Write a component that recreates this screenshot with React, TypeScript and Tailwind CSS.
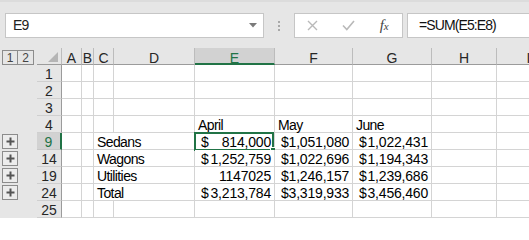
import React from 'react';

type Val = string | [string, string];

type RowData = {
  n: string;
  label?: string;
  e?: Val;
  f?: Val;
  g?: Val;
  head?: boolean;
  plus?: boolean;
  sel?: boolean;
};

const GRID =
  'grid grid-cols-[37px_25px_20px_12px_20px_81px_80px_78px_79px_65px_64px] h-[17px]';

const rows: RowData[] = [
  { n: '1' },
  { n: '2' },
  { n: '3' },
  { n: '4', head: true, e: 'April', f: 'May', g: 'June' },
  { n: '9', plus: true, sel: true, label: 'Sedans', e: ['$', '814,000'], f: ['$', '1,051,080'], g: ['$', '1,022,431'] },
  { n: '14', plus: true, label: 'Wagons', e: ['$', '1,252,759'], f: ['$', '1,022,696'], g: ['$', '1,194,343'] },
  { n: '19', plus: true, label: 'Utilities', e: '1147025', f: ['$', '1,246,157'], g: ['$', '1,239,686'] },
  { n: '24', plus: true, label: 'Total', e: ['$', '3,213,784'], f: ['$', '3,319,933'], g: ['$', '3,456,460'] },
  { n: '25' },
];

const cell = 'border-r border-b border-[#d4d4d4] bg-white h-[17px] leading-4 pt-px whitespace-nowrap';

function PlusButton() {
  return (
    <div className="w-[16px] h-[15px] border border-[#8c8c8c] bg-[#ececec] flex items-center justify-center">
      <svg width="9" height="9" viewBox="0 0 9 9">
        <path d="M4.5 0.5v8M0.5 4.5h8" stroke="#555" strokeWidth="2" />
      </svg>
    </div>
  );
}

function ValueCell({ v, head, selected }: { v?: Val; head?: boolean; selected?: boolean }) {
  let inner: React.ReactNode = null;
  if (Array.isArray(v)) {
    inner = (
      <div className="flex justify-between pl-[6px] pr-[3px] tracking-[-0.2px]">
        <span>{v[0]}</span>
        <span>{v[1]}</span>
      </div>
    );
  } else if (v && head) {
    inner = <div className="pl-[3px] tracking-[-0.6px]">{v}</div>;
  } else if (v) {
    inner = <div className="text-right pr-[3px] tracking-[-0.2px]">{v}</div>;
  }
  return (
    <div className={`${cell} relative`}>
      {inner}
      {selected && (
        <>
          <div className="absolute left-[-1px] top-[-1px] w-[80px] h-[19px] border-2 border-[#217346]" />
          <div className="absolute left-[75px] top-[14px] w-[7px] h-[7px] bg-[#217346] border border-white" />
        </>
      )}
    </div>
  );
}

function SheetRow({ r }: { r: RowData }) {
  return (
    <div className={GRID}>
      <div className="bg-[#e6e6e6] pl-[2px] pt-px">{r.plus && <PlusButton />}</div>
      <div
        className={
          r.sel
            ? 'h-[17px] bg-[#d2d2d2] text-[#217346] border-r-2 border-r-[#217346] border-b border-b-[#c6c6c6] text-center leading-4 pt-px'
            : 'h-[17px] bg-[#e6e6e6] text-[#262626] border-r border-r-[#9b9b9b] border-b border-b-[#cfcfcf] text-center leading-4 pt-px'
        }
      >
        {r.n}
      </div>
      <div className={cell} />
      <div className={cell} />
      {r.label ? (
        <div className={`${cell} col-span-2 pl-[3px] tracking-[-0.6px]`}>{r.label}</div>
      ) : (
        <>
          <div className={cell} />
          <div className={cell} />
        </>
      )}
      <ValueCell v={r.e} head={r.head} selected={r.sel} />
      <ValueCell v={r.f} head={r.head} />
      <ValueCell v={r.g} head={r.head} />
      <div className={cell} />
      <div className={cell} />
    </div>
  );
}

function HeaderRow() {
  const letters = ['A', 'B', 'C', 'D', 'E', 'F', 'G', 'H', 'I'];
  return (
    <div className={GRID}>
      <div className="bg-[#e6e6e6] flex pl-[2px] pt-[2px] text-[12px] text-[#444]">
        <div className="w-[16px] h-[15px] border border-[#8c8c8c] flex items-center justify-center leading-none">1</div>
        <div className="w-[16px] h-[15px] border border-l-0 border-[#8c8c8c] flex items-center justify-center leading-none">2</div>
      </div>
      <div className="bg-[#e6e6e6] border-r border-r-[#bcbcbc] border-b border-b-[#9b9b9b] flex items-end justify-start pl-[11px] pb-[2px]">
        <svg width="10" height="10" viewBox="0 0 10 10">
          <path d="M10 0V10H0Z" fill="#b5b5b5" />
        </svg>
      </div>
      {letters.map((l) => (
        <div
          key={l}
          className={
            l === 'E'
              ? 'h-[17px] bg-[#d2d2d2] text-[#217346] border-r border-r-[#bcbcbc] border-b-2 border-b-[#217346] text-center leading-[14px] pt-[3px]'
              : 'h-[17px] bg-[#e6e6e6] text-[#262626] border-r border-r-[#bcbcbc] border-b border-b-[#9b9b9b] text-center leading-[14px] pt-[3px]'
          }
        >
          {l}
        </div>
      ))}
    </div>
  );
}

function FormulaBar() {
  return (
    <div className="h-[48px] bg-[#e6e6e6] border-t-2 border-t-[#dcdcdc] flex items-start pt-[11px] pl-[5px] overflow-hidden">
      <div className="w-[259px] h-[25px] shrink-0 bg-white border border-[#c6c6c6] flex items-center justify-between pl-[7px] pr-[6px]">
        <span className="text-[14px] tracking-[-0.8px] text-[#222]">E9</span>
        <svg width="8" height="5" viewBox="0 0 8 5">
          <path d="M0 0H8L4 4.5Z" fill="#7a7a7a" />
        </svg>
      </div>
      <div className="w-[30px] h-[25px] shrink-0 flex flex-col items-center justify-center gap-[2px]">
        <div className="w-[2px] h-[2px] bg-[#a8a8a8]" />
        <div className="w-[2px] h-[2px] bg-[#a8a8a8]" />
        <div className="w-[2px] h-[2px] bg-[#a8a8a8]" />
      </div>
      <div className="w-[109px] h-[25px] shrink-0 bg-white border border-[#c6c6c6] grid grid-cols-3 items-center justify-items-center">
        <svg width="11" height="11" viewBox="0 0 11 11">
          <path d="M1 1L10 10M10 1L1 10" stroke="#b9b9b9" strokeWidth="1.4" />
        </svg>
        <svg width="13" height="11" viewBox="0 0 13 11">
          <path d="M1 5.5L4.8 9.5L12 1" stroke="#b9b9b9" strokeWidth="1.6" fill="none" />
        </svg>
        <span className="font-['Liberation_Serif',serif] italic text-[15px] text-[#444] leading-none">
          f<span className="text-[11px]">x</span>
        </span>
      </div>
      <div className="ml-[4px] w-[140px] h-[25px] shrink-0 bg-white border border-[#c6c6c6] flex items-center pl-[11px]">
        <span className="text-[14px] tracking-[-0.9px] text-[#111]">=SUM(E5:E8)</span>
      </div>
    </div>
  );
}

export default function App() {
  return (
    <div className="w-[529px] h-[218px] overflow-hidden bg-[#e6e6e6] font-['Liberation_Sans',Arial,sans-serif] text-[14px] text-black">
      <FormulaBar />
      <HeaderRow />
      {rows.map((r) => (
        <SheetRow key={r.n} r={r} />
      ))}
    </div>
  );
}
